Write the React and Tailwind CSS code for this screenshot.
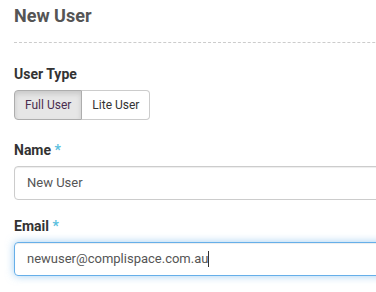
export default function App() {
  return (
    <div className="w-[376px] h-[292px] overflow-hidden bg-white" style={{ fontFamily: "Roboto, 'Liberation Sans', sans-serif" }}>
      <div className="pl-[14px] w-[420px]">
        <div className="pt-[6px] pb-[16px] border-b border-dashed border-[#cccccc]">
          <h1 className="text-[18px] leading-[20px] font-bold text-[#555555]">New User</h1>
        </div>

        <div className="mt-[21px] mb-[6px] text-[14px] leading-[20px] font-bold text-[#333333]">User Type</div>
        <div className="flex">
          <button className="h-[30px] px-[10px] text-[12px] text-[#4a2d4f] bg-[#e6e6e6] border border-[#adadad] rounded-l-[4px] shadow-[inset_0_3px_5px_rgba(0,0,0,0.125)]">
            Full User
          </button>
          <button className="h-[30px] px-[10px] text-[12px] text-[#333333] bg-white border border-l-0 border-[#cccccc] rounded-r-[4px]">
            Lite User
          </button>
        </div>

        <div className="mt-[20px] mb-[6px] text-[14px] leading-[20px] font-bold text-[#333333]">
          Name <span className="text-[#5bc0de]">*</span>
        </div>
        <div className="h-[34px] w-[400px] flex items-center px-[12px] text-[13px] text-[#555555] border border-[#cccccc] rounded-[4px] shadow-[inset_0_1px_1px_rgba(0,0,0,0.075)]">
          New User
        </div>

        <div className="mt-[16px] mb-[6px] text-[14px] leading-[20px] font-bold text-[#333333]">
          Email <span className="text-[#5bc0de]">*</span>
        </div>
        <div className="h-[34px] w-[400px] flex items-center px-[12px] text-[13px] text-[#555555] border border-[#66afe9] rounded-[4px] shadow-[inset_0_1px_1px_rgba(0,0,0,0.075),0_0_8px_rgba(102,175,233,0.6)]">
          <span>newuser@complispace.com.au</span>
          <span className="inline-block w-[1px] h-[16px] bg-[#333333]"></span>
        </div>
      </div>
    </div>
  );
}
